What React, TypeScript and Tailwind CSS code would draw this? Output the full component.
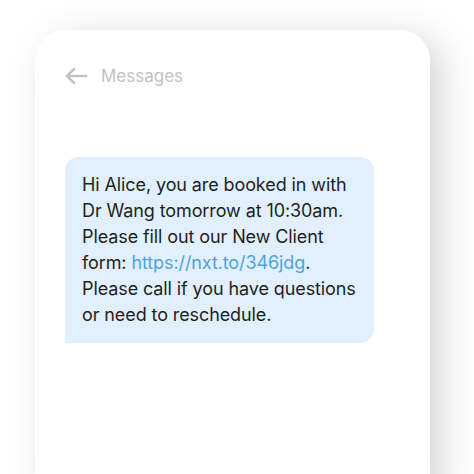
export default function App() {
  return (
    <div className="h-[474px] w-[474px] overflow-hidden bg-white" style={{ fontFamily: 'Inter, "Liberation Sans", sans-serif' }}>
      <div className="ml-[35px] mt-[30px] h-[460px] w-[395px] rounded-t-[30px] bg-white shadow-[12px_8px_36px_rgba(0,0,0,0.17)]">
        {/* header */}
        <div className="flex items-center gap-[13px] pl-[29px] pt-[37px]">
          <svg width="24" height="18" viewBox="0 0 24 18" fill="none" stroke="#c4c4c4" strokeWidth="2.6" strokeLinecap="round" strokeLinejoin="round">
            <path d="M22 9H3" />
            <path d="M10 2L3 9l7 7" />
          </svg>
          <span className="text-[17px] leading-none text-[#c2c2c2]">Messages</span>
        </div>

        {/* bubble */}
        <div className="ml-[30px] mt-[72px] w-[309px] rounded-[14px] rounded-bl-none bg-[#e1f0fc] px-[17px] pb-[15px] pt-[15px]">
          <p className="text-[18px] leading-[26px] tracking-[-0.1px] text-[#1f1f1f]">
            Hi Alice, you are booked in with
            <br />
            Dr Wang tomorrow at 10:30am.
            <br />
            Please fill out our New Client
            <br />
            form: <span className="text-[#4ea4dc]">https://nxt.to/346jdg</span>.
            <br />
            Please call if you have questions
            <br />
            or need to reschedule.
          </p>
        </div>
      </div>
    </div>
  );
}
